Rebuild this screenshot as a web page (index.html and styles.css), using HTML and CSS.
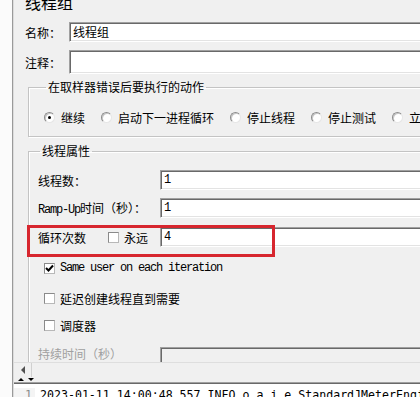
FILE: index.html
```html
<!DOCTYPE html>
<html lang="zh-CN">
<head>
    <meta charset="UTF-8">
    <title>线程组</title>
    <link rel="stylesheet" href="styles.css">
</head>
<body>
    <div class="app">
        <div class="strip"></div>
        <div class="main">
            <div class="panel">
                <div class="content">
                    <div class="title">线程组</div>

                    <div class="row name-row">
                        <span class="lbl">名称：</span>
                        <div class="field">线程组</div>
                    </div>
                    <div class="row comment-row">
                        <span class="lbl">注释：</span>
                        <div class="field tall"></div>
                    </div>

                    <fieldset class="group actions">
                        <legend>在取样器错误后要执行的动作</legend>
                        <div class="radios">
                            <label class="opt"><span class="radio on"></span>继续</label>
                            <label class="opt"><span class="radio"></span>启动下一进程循环</label>
                            <label class="opt"><span class="radio"></span>停止线程</label>
                            <label class="opt"><span class="radio"></span>停止测试</label>
                            <label class="opt"><span class="radio"></span>立即停止测试</label>
                        </div>
                    </fieldset>

                    <fieldset class="group props">
                        <legend>线程属性</legend>
                        <div class="prow first">
                            <span class="plbl">线程数：</span>
                            <div class="field mono">1</div>
                        </div>
                        <div class="prow ramp">
                            <span class="plbl"><span class="latin">Ramp-Up</span>时间（秒）：</span>
                            <div class="field mono">1</div>
                        </div>
                        <div class="prow loops">
                            <span class="plbl loop-lbl">
                                <span>循环次数</span>
                                <span class="check-opt"><span class="check"></span>永远</span>
                            </span>
                            <div class="field mono">4</div>
                        </div>
                        <div class="crow same-user">
                            <span class="check on">
                                <svg width="9" height="9" viewBox="0 0 9 9"><path d="M1 4 L3.5 6.5 L8 1.5" fill="none" stroke="#000" stroke-width="2"/></svg>
                            </span>
                            <span class="latin">Same user on each iteration</span>
                        </div>
                        <div class="crow delay">
                            <span class="check"></span>延迟创建线程直到需要
                        </div>
                        <div class="crow scheduler">
                            <span class="check"></span>调度器
                        </div>
                        <div class="prow duration">
                            <span class="plbl disabled">持续时间（秒）</span>
                            <div class="field off"></div>
                        </div>
                    </fieldset>

                    <!-- red mark drawn over the loop count row -->
                    <div class="highlight"></div>
                </div>
                <div class="hscroll">
                    <div class="sbtn"><span class="arr-left"></span></div>
                </div>
            </div>
            <div class="divider"><span class="up"></span><span class="down"></span></div>
            <div class="log">
                <span class="gutter">1</span>
                <span class="line">2023-01-11 14:00:48.557 INFO o.a.j.e.StandardJMeterEngine: Running the test!</span>
            </div>
        </div>
    </div>
</body>
</html>
```

FILE: styles.css
```css
/* Base */
body {
    margin: 0;
    width: 420px;
    height: 397px;
    overflow: hidden;
    background-color: #f0f0f0;
    font-family: "Noto Sans CJK SC", "Noto Sans", sans-serif;
    font-size: 12px;
    color: #000;
}

.app {
    display: flex;
    height: 397px;
}

.strip {
    width: 12px;
    flex: none;
    background: #fbfbfb;
    border-right: 1px solid #9a9a9a;
    box-shadow: 1px 0 0 #dcdcdc;
}

.main {
    flex: 1;
    min-width: 0;
    display: flex;
    flex-direction: column;
    margin-left: 1px;
}

/* Editor panel */
.panel {
    height: 377px;
    overflow: hidden;
    display: flex;
    flex-direction: column;
}

.content {
    position: relative;
    height: 362px;
    flex: none;
    overflow: hidden;
    padding-left: 11px;
}

.title {
    font-size: 16px;
    line-height: 18px;
    height: 18px;
    margin-top: -7px;
}

.row {
    display: flex;
    align-items: center;
    width: 560px;
}

.name-row {
    margin-top: 11px;
    height: 20px;
}

.comment-row {
    margin-top: 8px;
    height: 24px;
}

.lbl {
    width: 44px;
    flex: none;
}

.field {
    flex: 1;
    height: 20px;
    box-sizing: border-box;
    background: #fff;
    border: 1px solid;
    border-color: #a0a0a0 #fff #fff #a0a0a0;
    box-shadow: inset 1px 1px #696969, inset -1px -1px #e3e3e3;
    padding: 0 3px;
    line-height: 18px;
    white-space: nowrap;
}

.field.tall {
    height: 24px;
}

.field.off {
    background: #f0f0f0;
}

.mono,
.latin {
    font-family: "Liberation Mono", monospace;
    font-size: 12px;
    letter-spacing: -1.2px;
}

/* Group boxes */
.group {
    width: 540px;
    margin: 0 0 0 3px;
    padding: 0;
    min-width: 0;
    border: 1px solid #c4c4c4;
    box-shadow: inset 1px 1px #fff, 1px 1px #fff;
}

.group legend {
    margin-left: 2px;
    padding: 0 2px;
    line-height: 16px;
}

.actions {
    margin-top: 5px;
    padding: 14px 0 11px 15px;
}

.radios {
    display: flex;
    gap: 16px;
    height: 16px;
    align-items: center;
}

.opt {
    display: flex;
    align-items: center;
    gap: 6px;
    white-space: nowrap;
}

.radio {
    width: 11px;
    height: 11px;
    box-sizing: border-box;
    border-radius: 50%;
    background: #fff;
    border: 1px solid;
    border-color: #8c8c8c #e6e6e6 #e6e6e6 #8c8c8c;
    box-shadow: inset 1px 1px #c8c8c8;
    position: relative;
}

.radio.on::after {
    content: "";
    position: absolute;
    left: 3px;
    top: 3px;
    width: 3px;
    height: 3px;
    border-radius: 50%;
    background: #000;
}

.props {
    margin-top: 6px;
    padding: 11px 0 0 9px;
    height: 260px;
}

.prow {
    display: flex;
    align-items: center;
    height: 20px;
}

.ramp { margin-top: 8px; }
.loops { margin-top: 9px; }

.duration {
    margin-top: 14px;
    align-items: flex-start;
}

.duration .plbl {
    line-height: 16px;
    margin-top: -1px;
}

.plbl {
    width: 122px;
    flex: none;
    white-space: nowrap;
}

.plbl.disabled {
    color: #a0a0a0;
}

.loop-lbl {
    display: flex;
    align-items: center;
    gap: 22px;
}

.check-opt {
    display: flex;
    align-items: center;
    gap: 5px;
}

.crow {
    display: flex;
    align-items: center;
    gap: 5px;
    height: 16px;
    padding-left: 6px;
}

.same-user { margin-top: 13px; }
.delay { margin-top: 14px; }
.scheduler { margin-top: 11px; }

.check {
    width: 11px;
    height: 11px;
    box-sizing: border-box;
    background: #fff;
    border: 1px solid;
    border-color: #8a8a8a #b8b8b8 #b8b8b8 #8a8a8a;
    display: flex;
    align-items: center;
    justify-content: center;
    flex: none;
}

.highlight {
    position: absolute;
    left: 13px;
    top: 225px;
    width: 248px;
    height: 32px;
    box-sizing: border-box;
    border: 3px solid #d7262e;
}

/* Horizontal scrollbar */
.hscroll {
    height: 15px;
    flex: none;
    box-sizing: border-box;
    border-top: 1px solid #dedede;
    background: #f0f0f0;
    display: flex;
}

.sbtn {
    width: 18px;
    box-sizing: border-box;
    border-right: 1px solid #d0d0d0;
    display: flex;
    align-items: center;
    justify-content: center;
}

.arr-left {
    width: 0;
    height: 0;
    border-top: 4px solid transparent;
    border-bottom: 4px solid transparent;
    border-right: 4px solid #505050;
}

/* Split pane divider */
.divider {
    height: 5px;
    flex: none;
    display: flex;
    align-items: center;
    gap: 4px;
    padding-left: 4px;
    background: #f0f0f0;
}

.up,
.down {
    width: 0;
    height: 0;
    border-left: 3px solid transparent;
    border-right: 3px solid transparent;
}

.up { border-bottom: 3px solid #000; }
.down { border-top: 3px solid #000; }

/* Log area */
.log {
    flex: 1;
    display: flex;
    background: #fff;
    border-top: 1px solid #a0a0a0;
    box-shadow: inset 0 1px #696969;
    white-space: nowrap;
    overflow: hidden;
    font-family: "DejaVu Sans Mono", monospace;
    font-size: 11.6px;
    line-height: 14px;
    padding-top: 5px;
}

.gutter {
    width: 18px;
    flex: none;
    text-align: right;
    padding-right: 3px;
    color: #8a8a8a;
    background: #f4f4f4;
}

.line {
    padding-left: 5px;
}
```
